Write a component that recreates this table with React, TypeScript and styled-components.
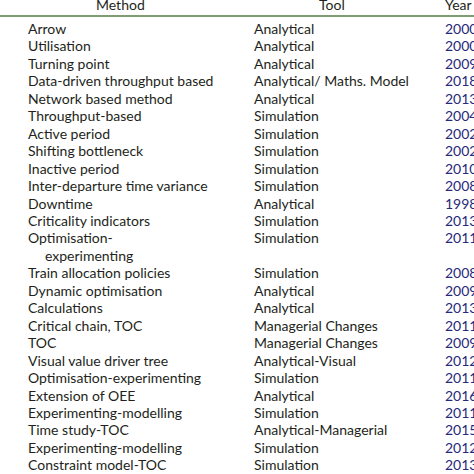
import React from "react";
import styled, { createGlobalStyle } from "styled-components";

const Global = createGlobalStyle`
  html, body { margin: 0; padding: 0; background: #ffffff; overflow: hidden; }
  body { width: 474px; height: 474px; }
`;

const Table = styled.div`
  margin-top: -4px;
  width: 520px;
  font-family: Lato, "Open Sans", sans-serif;
  font-size: 14px;
  line-height: 17.45px;
  color: #231f20;
`;

const HeaderRow = styled.div`
  display: grid;
  grid-template-columns: 254px 191px 1fr;
  height: 19px;
  border-bottom: 2px solid #7f9c72;
  box-sizing: border-box;
  height: 21px;
`;

const HeadCell = styled.div<{ $left: number }>`
  padding-left: ${(p) => p.$left}px;
  white-space: nowrap;
`;

const Body = styled.div`
  padding-top: 3px;
`;

const Row = styled.div`
  display: grid;
  grid-template-columns: 254px 191px 1fr;
`;

const MethodCell = styled.div`
  padding-left: 28px;
  white-space: nowrap;
`;

const Indent = styled.div`
  padding-left: 17px;
`;

const ToolCell = styled.div`
  white-space: nowrap;
`;

const YearCell = styled.div`
  color: #27297a;
  white-space: nowrap;
`;

type R = { m: string; t: string; y: string; cont?: string };

const rows: R[] = [
  { m: "Arrow", t: "Analytical", y: "2000" },
  { m: "Utilisation", t: "Analytical", y: "2000" },
  { m: "Turning point", t: "Analytical", y: "2009" },
  { m: "Data-driven throughput based", t: "Analytical/ Maths. Model", y: "2018" },
  { m: "Network based method", t: "Analytical", y: "2013" },
  { m: "Throughput-based", t: "Simulation", y: "2004" },
  { m: "Active period", t: "Simulation", y: "2002" },
  { m: "Shifting bottleneck", t: "Simulation", y: "2002" },
  { m: "Inactive period", t: "Simulation", y: "2010" },
  { m: "Inter-departure time variance", t: "Simulation", y: "2008" },
  { m: "Downtime", t: "Analytical", y: "1998" },
  { m: "Criticality indicators", t: "Simulation", y: "2013" },
  { m: "Optimisation-", cont: "experimenting", t: "Simulation", y: "2011" },
  { m: "Train allocation policies", t: "Simulation", y: "2008" },
  { m: "Dynamic optimisation", t: "Analytical", y: "2009" },
  { m: "Calculations", t: "Analytical", y: "2013" },
  { m: "Critical chain, TOC", t: "Managerial Changes", y: "2011" },
  { m: "TOC", t: "Managerial Changes", y: "2009" },
  { m: "Visual value driver tree", t: "Analytical-Visual", y: "2012" },
  { m: "Optimisation-experimenting", t: "Simulation", y: "2011" },
  { m: "Extension of OEE", t: "Analytical", y: "2016" },
  { m: "Experimenting-modelling", t: "Simulation", y: "2011" },
  { m: "Time study-TOC", t: "Analytical-Managerial", y: "2015" },
  { m: "Experimenting-modelling", t: "Simulation", y: "2012" },
  { m: "Constraint model-TOC", t: "Simulation", y: "2013" },
];

export default function App() {
  return (
    <>
      <Global />
      <Table>
        <HeaderRow>
          <HeadCell $left={96}>Method</HeadCell>
          <HeadCell $left={65}>Tool</HeadCell>
          <HeadCell $left={0}>Year</HeadCell>
        </HeaderRow>
        <Body>
          {rows.map((r, i) => (
            <Row key={i}>
              <MethodCell>
                {r.m}
                {r.cont && <Indent>{r.cont}</Indent>}
              </MethodCell>
              <ToolCell>{r.t}</ToolCell>
              <YearCell>{r.y}</YearCell>
            </Row>
          ))}
        </Body>
      </Table>
    </>
  );
}
